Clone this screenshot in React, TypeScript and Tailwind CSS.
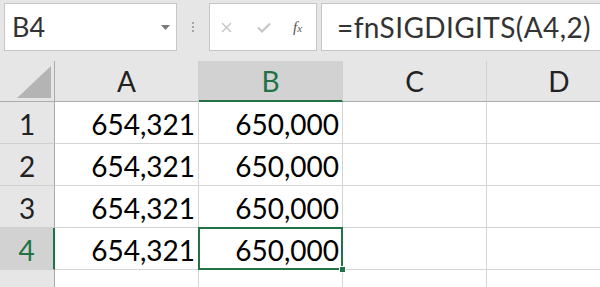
import React from "react";

const rows = [1, 2, 3, 4];
const font = { fontFamily: "Lato, 'Open Sans', sans-serif" };

function Toolbar() {
  return (
    <div className="flex items-start h-[61px] pt-[3px]">
      <div className="ml-[4px] w-[173px] h-[48px] bg-white border border-[#c6c6c6] flex items-center justify-between pl-[7px] pr-[6px]">
        <span className="text-[27px] text-[#333]">B4</span>
        <svg width="9" height="5" viewBox="0 0 9 5">
          <polygon points="0,0 9,0 4.5,5" fill="#7a7a7a" />
        </svg>
      </div>
      <div className="w-[32px] h-[48px] flex flex-col items-center justify-center gap-[2px]">
        <span className="w-[2px] h-[2px] bg-[#a6a6a6]" />
        <span className="w-[2px] h-[2px] bg-[#a6a6a6]" />
        <span className="w-[2px] h-[2px] bg-[#a6a6a6]" />
      </div>
      <div className="w-[108px] h-[48px] bg-white border border-[#c6c6c6] flex items-center">
        <svg className="ml-[11px]" width="11" height="11" viewBox="0 0 11 11">
          <path d="M1 1 L10 10 M10 1 L1 10" stroke="#c4c4c4" strokeWidth="1.4" />
        </svg>
        <svg className="ml-[25px]" width="14" height="11" viewBox="0 0 14 11">
          <path d="M1 5.5 L5 9.5 L13 1.5" stroke="#c4c4c4" strokeWidth="2" fill="none" />
        </svg>
        <span className="ml-[22px] text-[15px] italic text-[#555]" style={{ fontFamily: "'Liberation Serif', serif" }}>
          f<span className="text-[11px]">x</span>
        </span>
      </div>
      <div className="ml-[4px] flex-1 h-[48px] bg-white border border-[#c6c6c6] border-r-0 flex items-center pl-[15px]">
        <span className="text-[28px] text-[#333] tracking-[0.4px]">=fnSIGDIGITS(A4,2)</span>
      </div>
    </div>
  );
}

export default function App() {
  return (
    <div className="w-[600px] h-[287px] overflow-hidden bg-[#e6e6e6]" style={font}>
      <Toolbar />
      <div className="grid grid-cols-[55px_144px_144px_144px_144px]">
        {/* header row */}
        <div className="h-[41px] border-r border-b border-[#ababab] relative overflow-hidden">
          <svg className="absolute right-[3px] bottom-[3px]" width="34" height="32" viewBox="0 0 34 32">
            <polygon points="34,0 34,32 0,32" fill="#b4b4b4" />
          </svg>
        </div>
        <div className="h-[41px] border-r border-b border-r-[#d0d0d0] border-b-[#ababab] flex items-center justify-center text-[28px] text-[#222]">A</div>
        <div className="h-[41px] bg-[#d2d2d2] border-r border-r-[#d0d0d0] border-b-2 border-b-[#217346] flex items-center justify-center text-[28px] text-[#217346]">B</div>
        <div className="h-[41px] border-r border-b border-r-[#d0d0d0] border-b-[#ababab] flex items-center justify-center text-[28px] text-[#222]">C</div>
        <div className="h-[41px] border-b border-[#ababab] flex items-center justify-center text-[28px] text-[#222]">D</div>
        {rows.map((r) => {
          const sel = r === 4;
          return (
            <React.Fragment key={r}>
              <div
                className={`h-[42px] border-b border-b-[#d0d0d0] flex items-center justify-center pt-[2px] text-[28px] ${
                  sel ? "bg-[#d2d2d2] border-r-2 border-r-[#217346] text-[#217346]" : "border-r border-r-[#ababab] text-[#222]"
                }`}
              >
                {r}
              </div>
              <div className="h-[42px] bg-white border-r border-b border-[#d4d4d4] flex items-center justify-end pr-[3px] pt-[2px] text-[28px] text-black">654,321</div>
              <div className="h-[42px] bg-white border-r border-b border-[#d4d4d4] flex items-center justify-end pr-[3px] pt-[2px] text-[28px] text-black relative">
                650,000
                {sel && (
                  <>
                    <div className="absolute -left-[1px] -top-[1px] -right-[1px] -bottom-[1px] border-2 border-[#217346]" />
                    <div className="absolute -right-[4px] -bottom-[4px] w-[7px] h-[7px] bg-[#217346] border border-white" />
                  </>
                )}
              </div>
              <div className="h-[42px] bg-white border-r border-b border-[#d4d4d4]" />
              <div className="h-[42px] bg-white border-b border-[#d4d4d4]" />
            </React.Fragment>
          );
        })}
        <div className="h-[42px] border-r border-r-[#ababab] flex items-start justify-center pt-[6px] text-[28px] text-[#222]">5</div>
        <div className="h-[42px] bg-white border-r border-[#d4d4d4]" />
        <div className="h-[42px] bg-white border-r border-[#d4d4d4]" />
        <div className="h-[42px] bg-white border-r border-[#d4d4d4]" />
        <div className="h-[42px] bg-white" />
      </div>
    </div>
  );
}
